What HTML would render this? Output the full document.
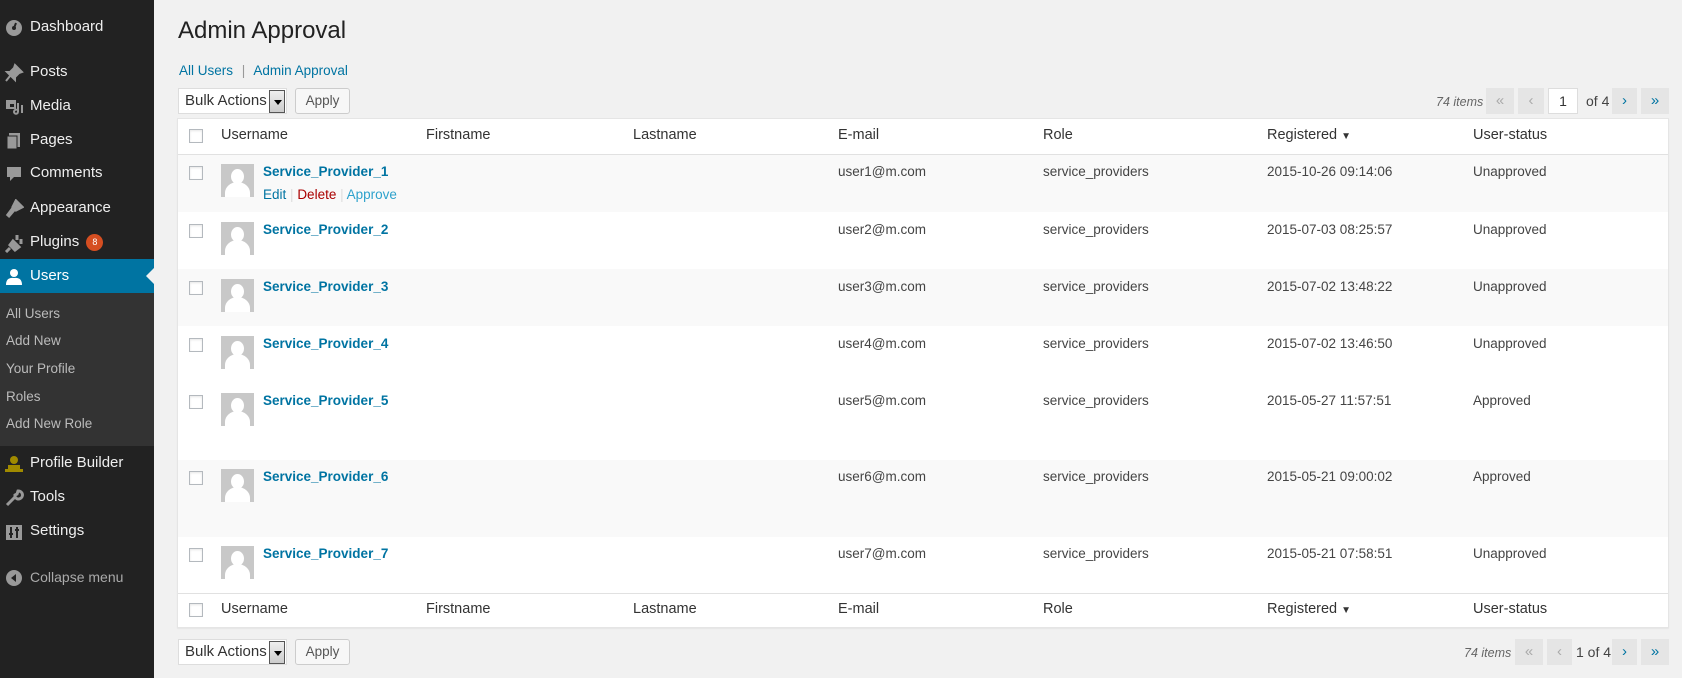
<!DOCTYPE html>
<html><head><meta charset="utf-8"><style>
*{margin:0;padding:0;box-sizing:border-box}
body{width:1682px;height:678px;background:#f1f1f1;font-family:"Liberation Sans",sans-serif;font-size:14px;color:#444;position:relative;overflow:hidden}
.sb{position:absolute;left:0;top:0;width:154px;height:678px;background:#222}
.mi{position:absolute;left:0;width:154px;height:34px;color:#eee;font-size:15px;line-height:34px;padding-left:30px}
.mi svg{position:absolute;left:4px;top:8px}
.sub{position:absolute;left:0;top:293px;width:154px;height:153px;background:#333}
.si{position:absolute;left:6px;color:#bbb;font-size:13.5px}
.a{position:absolute;white-space:nowrap}
.lnk{color:#0074a2}
.tbl{position:absolute;left:177px;top:118px;width:1492px;height:510px;background:#fff;box-shadow:0 1px 1px rgba(0,0,0,.05);border:1px solid #e5e5e5}
.row{position:absolute;left:0;width:1490px}
.cb{position:absolute;width:14px;height:14px;border:1px solid #b4b9be;background:#fff;box-shadow:inset 0 1px 2px rgba(0,0,0,.1)}
.av{position:absolute;width:33px;height:33px;background:#c8c8c8;overflow:hidden}
.av:before{content:"";position:absolute;left:10px;top:5px;width:13px;height:15px;border-radius:50%;background:#fff}
.av:after{content:"";position:absolute;left:4px;top:18px;width:25px;height:22px;border-radius:50% 50% 0 0;background:#fff}
.btn{position:absolute;height:26px;border:1px solid #ccc;background:#f7f7f7;border-radius:3px;font-size:13.5px;line-height:24px;text-align:center;color:#555}
.sel{position:absolute;height:26px;border:1px solid #ddd;background:#fff;font-size:15px;line-height:24px;padding-left:6px;color:#333}
.sel i{position:absolute;right:1px;top:1px;width:16px;height:23px;border:1px solid #555;background:linear-gradient(#eee,#ccc)}
.sel i:after{content:"";position:absolute;left:4px;top:9px;border:4px solid transparent;border-top:5px solid #000}
.pg{position:absolute;height:26px;background:#e5e5e5;text-align:center;line-height:26px;font-size:15px}
</style></head><body>
<div class="sb">
<div class="mi" style="top:10px"><svg width="20" height="20" viewBox="0 0 20 20"><circle cx="10" cy="10" r="8" fill="#999"/><circle cx="10" cy="10" r="2" fill="#222"/><path d="M10 10 L12 5" stroke="#222" stroke-width="2"/></svg>Dashboard</div>
<div class="mi" style="top:55px"><svg width="20" height="20" viewBox="0 0 20 20"><path d="M11 2 L18 9 L15 10 L11 14 L11 17 L3 9 L6 9 L10 5Z M6 13 L2 18" stroke="#999" stroke-width="2" fill="#999"/></svg>Posts</div>
<div class="mi" style="top:89px"><svg width="20" height="20" viewBox="0 0 20 20"><rect x="2" y="3" width="10" height="9" fill="#999"/><rect x="6" y="7" width="4" height="3" fill="#222"/><path d="M14 6v9 M14 15 a2 2 0 1 1 -1 -2 M18 8v8" stroke="#999" stroke-width="2" fill="none"/></svg>Media</div>
<div class="mi" style="top:123px"><svg width="20" height="20" viewBox="0 0 20 20"><rect x="5" y="2" width="11" height="14" fill="#999"/><rect x="3" y="5" width="10" height="13" fill="#999" stroke="#222"/></svg>Pages</div>
<div class="mi" style="top:156px"><svg width="20" height="20" viewBox="0 0 20 20"><path d="M3 3h14v10H10l-4 4v-4H3z" fill="#999"/></svg>Comments</div>
<div class="mi" style="top:191px"><svg width="20" height="20" viewBox="0 0 20 20"><path d="M12 2 L18 8 L12 11 L9 8Z M9 9 L3 17 M10 11 L4 18" stroke="#999" stroke-width="3" fill="#999"/></svg>Appearance</div>
<div class="mi" style="top:225px"><svg width="20" height="20" viewBox="0 0 20 20"><path d="M13 2v5 M17 6v5 M9 8 L15 14 L11 17 L6 12Z M6 15 L2 19" stroke="#999" stroke-width="3" fill="#999"/></svg>Plugins <span style="display:inline-block;width:17px;height:17px;border-radius:50%;background:#d54e21;color:#fff;font-size:9px;line-height:17px;text-align:center;vertical-align:middle;margin-left:3px">8</span></div>
<div class="mi" style="top:259px;background:#0074a2;color:#fff"><svg width="20" height="20" viewBox="0 0 20 20"><circle cx="10" cy="6" r="4" fill="#fff"/><path d="M2 18 Q2 10 10 11 Q18 10 18 18Z" fill="#fff"/></svg>Users<span style="position:absolute;right:0;top:9px;border:8px solid transparent;border-right-color:#f1f1f1"></span></div>
<div class="sub">
<div class="si" style="top:13px">All Users</div>
<div class="si" style="top:40px">Add New</div>
<div class="si" style="top:68px">Your Profile</div>
<div class="si" style="top:96px">Roles</div>
<div class="si" style="top:123px">Add New Role</div>
</div>
<div class="mi" style="top:446px"><svg width="20" height="20" viewBox="0 0 20 20"><circle cx="10" cy="6" r="4" fill="#a08a00"/><path d="M4 11h12v4h3v3H1v-3h3z" fill="#a08a00"/></svg>Profile Builder</div>
<div class="mi" style="top:480px"><svg width="20" height="20" viewBox="0 0 20 20"><path d="M3 17 L11 9 M11 9 a4 4 0 1 0 3 -6 l-1 3 l-2 1Z" stroke="#999" stroke-width="3" fill="none"/></svg>Tools</div>
<div class="mi" style="top:514px"><svg width="20" height="20" viewBox="0 0 20 20"><rect x="2" y="3" width="16" height="15" fill="#999"/><path d="M7 5v11 M13 5v11 M5 12h4 M11 8h4" stroke="#222" stroke-width="2"/></svg>Settings</div>
<div class="mi" style="top:560px;color:#aaa;font-size:14px"><svg width="20" height="20" viewBox="0 0 20 20"><circle cx="10" cy="10" r="8" fill="#999"/><path d="M12 6 L7 10 L12 14Z" fill="#222"/></svg>Collapse menu</div>
</div>

<div class="a" style="left:178px;top:17px;font-size:24px;color:#222">Admin Approval</div>
<div class="a" style="left:179px;top:63px;font-size:13.5px"><span class="lnk">All Users</span> <span style="color:#999;margin:0 5px">|</span> <span class="lnk">Admin Approval</span></div>

<div class="sel" style="left:178px;top:88px;width:109px">Bulk Actions<i></i></div>
<div class="btn" style="left:295px;top:88px;width:55px">Apply</div>
<div class="a" style="left:1436px;top:95px;font-size:12.5px;font-style:italic;color:#666">74 items</div>
<div class="pg" style="left:1486px;top:88px;width:28px;color:#aaa">«</div>
<div class="pg" style="left:1518px;top:88px;width:26px;color:#aaa">‹</div>
<div class="a" style="left:1548px;top:88px;width:30px;height:26px;background:#fff;border:1px solid #ddd;text-align:center;line-height:24px;font-size:14px;color:#333">1</div>
<div class="a" style="left:1586px;top:93px;font-size:14px">of 4</div>
<div class="pg" style="left:1612px;top:88px;width:25px;color:#0074a2">›</div>
<div class="pg" style="left:1641px;top:88px;width:28px;color:#0074a2">»</div>

<div class="tbl">
<div class="row" style="top:0;height:36px;border-bottom:1px solid #e1e1e1"></div>
<div class="row" style="top:36px;height:57px;background:#f9f9f9"></div>
<div class="row" style="top:150px;height:57px;background:#f9f9f9"></div>
<div class="row" style="top:341px;height:77px;background:#f9f9f9"></div>
<div class="row" style="top:474px;height:35px;border-top:1px solid #e1e1e1"></div>
</div>

<div id="cells"></div>
<script>
var h='';
function hdr(y){
h+='<div class="cb" style="left:189px;top:'+(y-7)+'px"></div>';
var c=[[221,'Username'],[426,'Firstname'],[633,'Lastname'],[838,'E-mail'],[1043,'Role'],[1267,'Registered <span style="font-size:10px">▼</span>'],[1473,'User-status']];
c.forEach(function(k){h+='<div class="a" style="left:'+k[0]+'px;top:'+(y-9)+'px;font-size:14.5px;color:#333">'+k[1]+'</div>';});
}
hdr(136);hdr(610);
var rows=[[154,'1','2015-10-26 09:14:06','Unapproved'],[212,'2','2015-07-03 08:25:57','Unapproved'],[269,'3','2015-07-02 13:48:22','Unapproved'],[326,'4','2015-07-02 13:46:50','Unapproved'],[383,'5','2015-05-27 11:57:51','Approved'],[459,'6','2015-05-21 09:00:02','Approved'],[536,'7','2015-05-21 07:58:51','Unapproved']];
rows.forEach(function(r){
var y=r[0];
h+='<div class="cb" style="left:189px;top:'+(y+12)+'px"></div>';
h+='<div class="av" style="left:221px;top:'+(y+10)+'px"></div>';
h+='<div class="a lnk" style="left:263px;top:'+(y+10)+'px;font-weight:bold;font-size:13.5px">Service_Provider_'+r[1]+'</div>';
h+='<div class="a" style="left:838px;top:'+(y+10)+'px;font-size:13.5px">user'+r[1]+'@m.com</div>';
h+='<div class="a" style="left:1043px;top:'+(y+10)+'px;font-size:13.5px">service_providers</div>';
h+='<div class="a" style="left:1267px;top:'+(y+10)+'px;font-size:13.5px">'+r[2]+'</div>';
h+='<div class="a" style="left:1473px;top:'+(y+10)+'px;font-size:13.5px">'+r[3]+'</div>';
});
h+='<div class="a" style="left:263px;top:187px;font-size:13.5px"><span class="lnk">Edit</span> <span style="color:#ddd">|</span> <span style="color:#a00">Delete</span> <span style="color:#ddd">|</span> <span style="color:#2ea2cc">Approve</span></div>';
document.getElementById('cells').innerHTML=h;
</script>

<div class="sel" style="left:178px;top:639px;width:109px">Bulk Actions<i></i></div>
<div class="btn" style="left:295px;top:639px;width:55px">Apply</div>
<div class="a" style="left:1464px;top:646px;font-size:12.5px;font-style:italic;color:#666">74 items</div>
<div class="pg" style="left:1515px;top:639px;width:28px;color:#aaa">«</div>
<div class="pg" style="left:1547px;top:639px;width:25px;color:#aaa">‹</div>
<div class="a" style="left:1576px;top:644px;font-size:14px">1 of 4</div>
<div class="pg" style="left:1612px;top:639px;width:25px;color:#0074a2">›</div>
<div class="pg" style="left:1641px;top:639px;width:28px;color:#0074a2">»</div>
</body></html>
